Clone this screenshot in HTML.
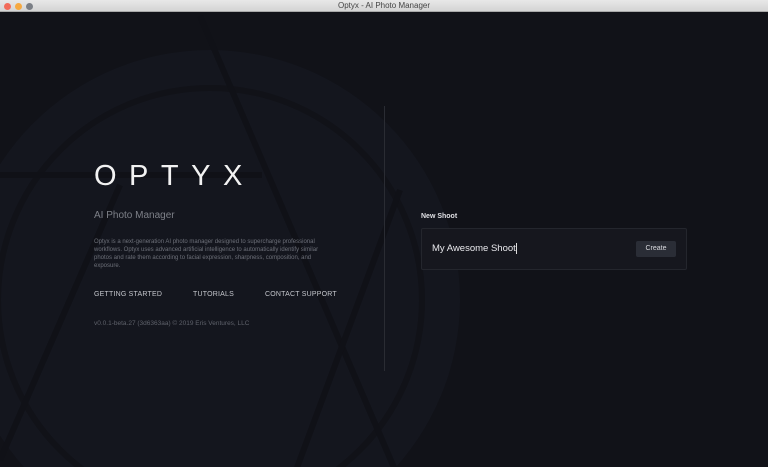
<!DOCTYPE html>
<html><head><meta charset="utf-8"><style>
*{margin:0;padding:0;box-sizing:border-box}
html,body{width:768px;height:467px;overflow:hidden}
body{background:#111218;font-family:"Liberation Sans",sans-serif;position:relative}
.tb{position:absolute;left:0;top:0;width:768px;height:12px;background:linear-gradient(#e8e8e8,#d4d4d4);border-bottom:1px solid #a9a9a9;text-align:center;font-size:8px;line-height:12px;color:#444;z-index:2}
.dot{position:absolute;top:3px;width:7px;height:7px;border-radius:50%}
svg{position:absolute;left:0;top:12px;display:block}
.abs{position:absolute;white-space:nowrap}
</style></head><body>
<div class="tb">Optyx - AI Photo Manager
<span class="dot" style="left:4px;background:#f26b5a"></span><span class="dot" style="left:15px;background:#f6a941"></span><span class="dot" style="left:26px;background:#7b7f86"></span></div>
<svg width="768" height="455" viewBox="0 12 768 455">
<circle cx="210" cy="300" r="250" fill="#14161e"/>
<circle cx="210" cy="300" r="212" fill="none" stroke="#111218" stroke-width="6"/>
<g stroke="#101117" stroke-width="6" fill="none">
<line x1="0" y1="175" x2="262" y2="175"/>
<line x1="200" y1="16" x2="395" y2="470"/>
<line x1="0" y1="527" x2="300" y2="527"/>
<line x1="120" y1="185" x2="0" y2="460"/>
<line x1="400" y1="190" x2="275" y2="527"/>
</g>
</svg>
<div class="abs" style="left:384px;top:106px;width:1px;height:265px;background:#2a2c33"></div>
<div class="abs" style="left:94px;top:160px;font-size:29px;letter-spacing:12.5px;color:#f2f2f2">OPTYX</div>
<div class="abs" style="left:94px;top:210px;font-size:10px;color:#7d8088">AI Photo Manager</div>
<div class="abs" style="left:94px;top:238px;width:232px;white-space:normal;font-size:6px;line-height:8px;color:#6d7079">Optyx is a next-generation AI photo manager designed to supercharge professional workflows. Optyx uses advanced artificial intelligence to automatically identify similar photos and rate them according to facial expression, sharpness, composition, and exposure.</div>
<div class="abs" style="left:94px;top:291px;font-size:7px;letter-spacing:.2px;color:#c4c6cc">GETTING STARTED</div>
<div class="abs" style="left:193px;top:291px;font-size:7px;letter-spacing:.2px;color:#c4c6cc">TUTORIALS</div>
<div class="abs" style="left:265px;top:291px;font-size:7px;letter-spacing:.2px;color:#c4c6cc">CONTACT SUPPORT</div>
<div class="abs" style="left:94px;top:320px;font-size:6.5px;color:#5e616a">v0.0.1-beta.27 (3d6363aa) © 2019 Eris Ventures, LLC</div>
<div class="abs" style="left:421px;top:213px;font-size:7px;font-weight:bold;color:#e0e0e4">New Shoot</div>
<div class="abs" style="left:421px;top:228px;width:266px;height:42px;background:#16171e;border:1px solid #24262d;border-radius:2px"></div>
<div class="abs" style="left:432px;top:243px;font-size:9.5px;color:#e8e8ec">My Awesome Shoot<span style="border-left:1px solid #ddd"></span></div>
<div class="abs" style="left:636px;top:241px;width:40px;height:16px;background:#2a2d36;border-radius:2px;font-size:7px;color:#d8d9de;text-align:center;line-height:16px">Create</div>
</body></html>
